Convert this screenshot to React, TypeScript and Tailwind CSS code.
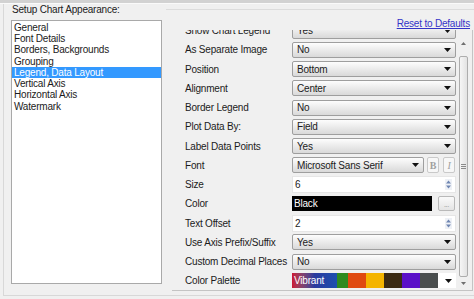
import React from "react";

type Kind = "select" | "font" | "number" | "color" | "palette";
type Row = { label: string; kind: Kind; value: string };

const rows: Row[] = [
  { label: "Show Chart Legend", kind: "select", value: "Yes" },
  { label: "As Separate Image", kind: "select", value: "No" },
  { label: "Position", kind: "select", value: "Bottom" },
  { label: "Alignment", kind: "select", value: "Center" },
  { label: "Border Legend", kind: "select", value: "No" },
  { label: "Plot Data By:", kind: "select", value: "Field" },
  { label: "Label Data Points", kind: "select", value: "Yes" },
  { label: "Font", kind: "font", value: "Microsoft Sans Serif" },
  { label: "Size", kind: "number", value: "6" },
  { label: "Color", kind: "color", value: "Black" },
  { label: "Text Offset", kind: "number", value: "2" },
  { label: "Use Axis Prefix/Suffix", kind: "select", value: "Yes" },
  { label: "Custom Decimal Places", kind: "select", value: "No" },
  { label: "Color Palette", kind: "palette", value: "Vibrant" },
];

const sections = [
  "General",
  "Font Details",
  "Borders, Backgrounds",
  "Grouping",
  "Legend, Data Layout",
  "Vertical Axis",
  "Horizontal Axis",
  "Watermark",
];

const swatches = ["#2f8a1e", "#e04a10", "#f4b400", "#3b2a12", "#5a10c8", "#4a4e4e"];

function Caret() {
  return (
    <svg width="7" height="4" viewBox="0 0 7 4" className="shrink-0">
      <path d="M0 0h7L3.5 4z" fill="#111" />
    </svg>
  );
}

function Spinner() {
  return (
    <svg width="7" height="11" viewBox="0 0 7 11" className="shrink-0">
      <rect x="0" y="0" width="7" height="11" fill="#eef1f6" />
      <path d="M1 4.5L3.5 1.5L6 4.5z" fill="#6f86b2" />
      <path d="M1 6.5L3.5 9.5L6 6.5z" fill="#6f86b2" />
    </svg>
  );
}

const selectCls =
  "flex h-[16px] items-center justify-between rounded-[2px] border border-[#9e9e9e] bg-gradient-to-b from-[#fdfdfd] to-[#d9d9d9] px-[4px]";

function Control({ row }: { row: Row }) {
  if (row.kind === "select") {
    return (
      <div className={`${selectCls} w-[164px]`}>
        <span>{row.value}</span>
        <Caret />
      </div>
    );
  }
  if (row.kind === "font") {
    return (
      <div className="flex w-[164px] items-center">
        <div className={`${selectCls} w-[132px]`}>
          <span>{row.value}</span>
          <Caret />
        </div>
        <div className="ml-[3px] flex h-[16px] w-[12px] items-center justify-center rounded-[2px] border border-[#c9c9c9] bg-[#f7f7f7] font-['Liberation_Serif',serif] text-[10px] font-bold text-[#a0a0a0]">
          B
        </div>
        <div className="ml-[4px] flex h-[16px] w-[12px] items-center justify-center rounded-[2px] border border-[#c9c9c9] bg-[#f7f7f7] font-['Liberation_Serif',serif] text-[10px] italic text-[#a0a0a0]">
          I
        </div>
      </div>
    );
  }
  if (row.kind === "number") {
    return (
      <div className="flex h-[17px] w-[164px] items-center justify-between border border-[#e6e6e6] bg-white pl-[2px] pr-[3px]">
        <span>{row.value}</span>
        <Spinner />
      </div>
    );
  }
  if (row.kind === "color") {
    return (
      <div className="flex w-[164px] items-center">
        <div className="flex h-[15px] w-[140px] items-center bg-black pl-[2px] text-white">{row.value}</div>
        <div className="ml-[6px] flex h-[15px] w-[17px] items-end justify-center rounded-[2px] border border-[#b9b9b9] bg-gradient-to-b from-[#fafafa] to-[#e4e4e4] pb-[2px] text-[7px] leading-none text-[#888]">
          ...
        </div>
      </div>
    );
  }
  return (
    <div className="flex h-[15px] w-[164px] items-center bg-white pr-[4px]">
      <div className="flex h-full w-[45px] items-center bg-gradient-to-r from-[#cc1133] via-[#2a3a9e] to-[#1c4fae] pl-[2px] text-white">
        {row.value}
      </div>
      {swatches.map((c, i) => (
        <div key={c} className={`h-full ${i === 0 ? "w-[11px]" : "w-[18px]"}`} style={{ backgroundColor: c }} />
      ))}
      <div className="flex-1" />
      <Caret />
    </div>
  );
}

export default function App() {
  return (
    <div className="h-[299px] w-[474px] overflow-hidden bg-[#f0f0f0] font-['Liberation_Sans',Arial,sans-serif] text-[10px] tracking-[-0.2px] text-[#1b1b1b]">
      <div className="h-[3px] bg-[#d2d2d2]" />
      <div className="h-[1px] bg-[#fafafa]" />

      <div className="ml-[3px] flex h-[292px] border-b border-l border-[#d8d8d8]">
        {/* left: section list */}
        <div className="w-[162px] shrink-0">
          <div className="h-[12px] pl-[8px] leading-[12px]">Setup Chart Appearance:</div>
          <div className="ml-[7px] mt-[4px] h-[264px] w-[151px] border border-[#a9a9a9] bg-white pt-[1px]">
            {sections.map((s) => (
              <div
                key={s}
                className={`flex h-[11.3px] items-center pl-[2px] leading-none ${
                  s === "Legend, Data Layout" ? "bg-[#3399ff] text-white" : ""
                }`}
              >
                {s}
              </div>
            ))}
          </div>
        </div>

        {/* right: properties */}
        <div className="flex-1">
          <div className="mt-[5px] h-[1px] bg-[#dcdcdc]" />
          <div className="flex h-[20px] items-end justify-end pr-[4px]">
            <span className="relative top-[1px] text-[#3434c8] underline">Reset to Defaults</span>
          </div>
          <div className="ml-[6px] flex h-[261px] w-[301px] border-b border-r border-[#c4c4c4]">
            <div className="w-[286px] overflow-hidden">
              <div className="-mt-[9px]">
                {rows.map((r) => (
                  <div key={r.label} className="flex h-[19.25px] items-center">
                    <div className="w-[120px] shrink-0 pl-[13px]">{r.label}</div>
                    <Control row={r} />
                  </div>
                ))}
              </div>
            </div>
            <div className="flex w-[14px] flex-col items-start pl-[1px]">
              <div className="flex h-[26px] w-[9px] items-center justify-center">
                <svg width="5" height="3" viewBox="0 0 5 3">
                  <path d="M0 3L2.5 0L5 3z" fill="#707070" />
                </svg>
              </div>
              <div className="flex h-[221px] w-[9px] flex-col items-center justify-center gap-[1px] rounded-[2px] border border-[#adadad] bg-gradient-to-r from-[#f6f6f6] to-[#e3e3e3]">
                <div className="h-[1px] w-[5px] bg-[#8a8a8a]" />
                <div className="h-[1px] w-[5px] bg-[#8a8a8a]" />
                <div className="h-[1px] w-[5px] bg-[#8a8a8a]" />
              </div>
              <div className="flex h-[13px] w-[9px] items-center justify-center">
                <svg width="5" height="3" viewBox="0 0 5 3">
                  <path d="M0 0L2.5 3L5 0z" fill="#707070" />
                </svg>
              </div>
            </div>
          </div>
        </div>
      </div>
    </div>
  );
}
